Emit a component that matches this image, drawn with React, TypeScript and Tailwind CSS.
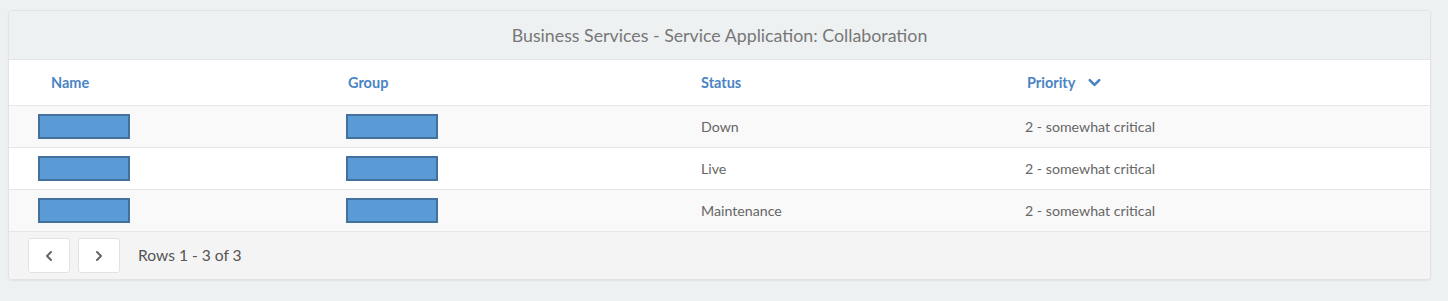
import { ChevronDown, ChevronLeft, ChevronRight } from "lucide-react";

const rows = [
  { status: "Down", priority: "2 - somewhat critical" },
  { status: "Live", priority: "2 - somewhat critical" },
  { status: "Maintenance", priority: "2 - somewhat critical" },
];

const cols = "grid grid-cols-[308px_355px_324px_1fr]";

function Redacted() {
  return (
    <div className="h-[25px] w-[92px] border-2 border-[#41719c] bg-[#5b9bd5]" />
  );
}

export default function App() {
  return (
    <div className="h-[301px] w-full bg-[#eef1f2] pl-2 pr-[17px] pt-[10px] font-['Lato','Noto_Sans',sans-serif]">
      <div className="overflow-hidden rounded-[4px] border border-[#e1e4e6] bg-[#f4f4f4] shadow-[0_1px_2px_rgba(0,0,0,0.06)]">
        <div className="flex h-[49px] items-center justify-center border-b border-[#e3e6e8] bg-[#eef1f2] text-[17.8px] text-[#777]">
          Business Services - Service Application: Collaboration
        </div>

        <div
          className={`${cols} h-[46px] items-center border-b border-[#e6e6e6] bg-white text-[14.5px] font-bold text-[#4a84c4]`}
        >
          <div className="pl-[42px]">Name</div>
          <div className="pl-[31px]">Group</div>
          <div className="pl-[29px]">Status</div>
          <div className="flex items-center gap-[10px] pl-[31px]">
            Priority
            <ChevronDown className="h-[19px] w-[19px]" strokeWidth={3.4} />
          </div>
        </div>

        {rows.map((row, i) => (
          <div
            key={row.status}
            className={`${cols} h-[42px] items-center border-b border-[#e6e6e6] text-[14.2px] text-[#666] ${
              i % 2 === 1 ? "bg-white" : "bg-[#f9f9f9]"
            }`}
          >
            <div className="pl-[29px]">
              <Redacted />
            </div>
            <div className="pl-[29px]">
              <Redacted />
            </div>
            <div className="pl-[29px]">{row.status}</div>
            <div className="pl-[29px]">{row.priority}</div>
          </div>
        ))}

        <div className="flex h-[47px] items-center gap-[8px] bg-[#f4f4f4] pl-[19px]">
          <button className="flex h-[35px] w-[42px] items-center justify-center rounded-[3px] border border-[#e2e2e2] bg-white text-[#666]">
            <ChevronLeft className="h-[16px] w-[16px]" strokeWidth={3} />
          </button>
          <button className="flex h-[35px] w-[42px] items-center justify-center rounded-[3px] border border-[#e2e2e2] bg-white text-[#666]">
            <ChevronRight className="h-[16px] w-[16px]" strokeWidth={3} />
          </button>
          <span className="ml-[10px] text-[15.6px] text-[#555]">Rows 1 - 3 of 3</span>
        </div>
      </div>
    </div>
  );
}
